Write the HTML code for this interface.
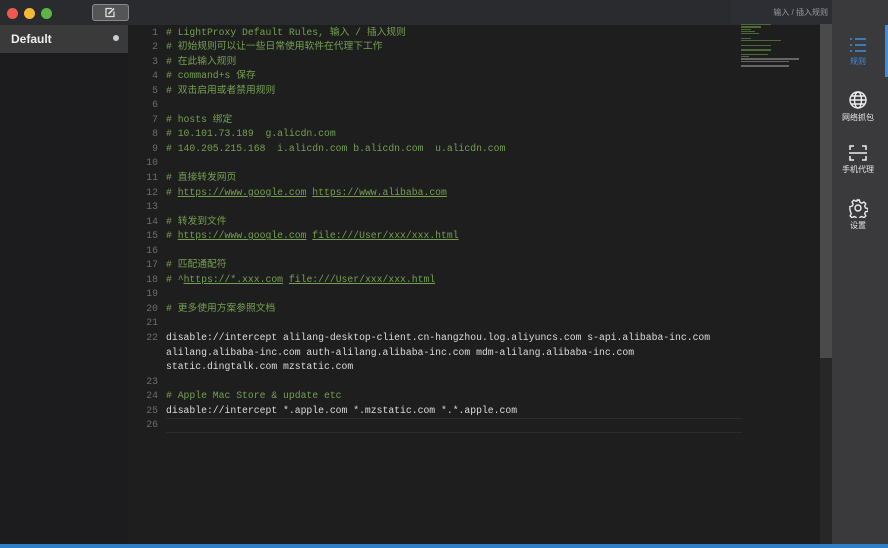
<!DOCTYPE html>
<html><head><meta charset="utf-8"><style>
*{margin:0;padding:0;box-sizing:border-box}
body{width:888px;height:548px;overflow:hidden;background:#1e1e1e;font-family:"Liberation Sans","Noto Sans CJK SC",sans-serif;position:relative}
.title{position:absolute;left:0;top:0;width:832px;height:25px;background:#2a2b2f}
.dot{position:absolute;top:8px;width:11px;height:11px;border-radius:50%}
.btn{position:absolute;left:92px;top:4px;width:37px;height:17px;border:1px solid #8a8a8a;border-radius:3px;background:#555}
.side{position:absolute;left:0;top:25px;width:128px;height:519px;background:#1c1c1e}
.sel{position:absolute;left:0;top:25px;width:128px;height:28px;background:#3a3a3a;color:#eee;font-size:12px;font-weight:bold;padding:7px 11px}
.sel i{position:absolute;right:9px;top:10px;width:6px;height:6px;border-radius:50%;background:#c8ccd6}
.ed{position:absolute;left:128px;top:25.5px;width:692px;height:518px;background:#1e1e1e;font-family:"Liberation Mono","Noto Sans CJK SC",monospace;font-size:9.75px}
.l{height:14.55px;line-height:14.55px;position:relative;white-space:pre;color:#dcdcdc;padding-left:38px}
.l b{position:absolute;left:0;width:30px;text-align:right;color:#6c6c6c;font-weight:normal}
.c{color:#73a050}
.c u{text-decoration:underline}
.cur{border-top:1px solid #2c2c2c;border-bottom:1px solid #2c2c2c;width:576px;margin-left:38px;padding-left:0}
.sb{position:absolute;left:820px;top:24px;width:12px;height:520px;background:#272727}
.th{position:absolute;left:820px;top:24px;width:12px;height:334px;background:#4a4a4a}
.right{position:absolute;left:832px;top:0;width:56px;height:544px;background:#3a3a3c}
.acc{position:absolute;left:885px;top:25px;width:3px;height:52px;background:#3c8ee0}
.it{position:absolute;left:832px;width:52px;text-align:center;font-size:8px;color:#e8e8e8}
.bc{position:absolute;left:730px;top:0;width:102px;height:24px;background:#2d2e33;color:#9a9a9a;font-size:8px;text-align:right;padding:7px 4px 0 0}
.bot{position:absolute;left:0;top:544px;width:888px;height:4px;background:#2f7fc8}
.mm{position:absolute;left:741px;top:24px;width:60px;height:48px}
.mm div{height:1.3px;margin-bottom:1px;background:#4d6a36}
</style></head><body>
<div class="title"></div>
<div class="dot" style="left:7px;background:#ee5a52"></div>
<div class="dot" style="left:24px;background:#f4b935"></div>
<div class="dot" style="left:41px;background:#5cb545"></div>
<div class="btn"><svg width="35" height="15" viewBox="0 0 35 15"><path d="M19 3.5h-6v8h8v-5" fill="none" stroke="#ddd" stroke-width="1.3"/><path d="M15.5 9l5.5-5.5" stroke="#ddd" stroke-width="1.6"/></svg></div>
<div class="side"></div>
<div class="sel">Default<i></i></div>
<div class="ed">
<div class="l c"><b>1</b># LightProxy Default Rules, 输入 / 插入规则</div>
<div class="l c"><b>2</b># 初始规则可以让一些日常使用软件在代理下工作</div>
<div class="l c"><b>3</b># 在此输入规则</div>
<div class="l c"><b>4</b># command+s 保存</div>
<div class="l c"><b>5</b># 双击启用或者禁用规则</div>
<div class="l"><b>6</b></div>
<div class="l c"><b>7</b># hosts 绑定</div>
<div class="l c"><b>8</b># 10.101.73.189  g.alicdn.com</div>
<div class="l c"><b>9</b># 140.205.215.168  i.alicdn.com b.alicdn.com  u.alicdn.com</div>
<div class="l"><b>10</b></div>
<div class="l c"><b>11</b># 直接转发网页</div>
<div class="l c"><b>12</b># <u>https://www.google.com</u> <u>https://www.alibaba.com</u></div>
<div class="l"><b>13</b></div>
<div class="l c"><b>14</b># 转发到文件</div>
<div class="l c"><b>15</b># <u>https://www.google.com</u> <u>file:///User/xxx/xxx.html</u></div>
<div class="l"><b>16</b></div>
<div class="l c"><b>17</b># 匹配通配符</div>
<div class="l c"><b>18</b># ^<u>https://*.xxx.com</u> <u>file:///User/xxx/xxx.html</u></div>
<div class="l"><b>19</b></div>
<div class="l c"><b>20</b># 更多使用方案参照文档</div>
<div class="l"><b>21</b></div>
<div class="l"><b>22</b>disable://intercept alilang-desktop-client.cn-hangzhou.log.aliyuncs.com s-api.alibaba-inc.com</div>
<div class="l">alilang.alibaba-inc.com auth-alilang.alibaba-inc.com mdm-alilang.alibaba-inc.com</div>
<div class="l">static.dingtalk.com mzstatic.com</div>
<div class="l"><b>23</b></div>
<div class="l c"><b>24</b># Apple Mac Store &amp; update etc</div>
<div class="l"><b>25</b>disable://intercept *.apple.com *.mzstatic.com *.*.apple.com</div>
<div class="l" style="padding-left:0"><b>26</b><div class="cur" style="height:14.55px"></div></div>
</div>
<div class="mm"><div style="width:30px"></div><div style="width:20px"></div><div style="width:10px"></div><div style="width:14px"></div><div style="width:18px"></div><div style="width:0"></div><div style="width:10px"></div><div style="width:40px"></div><div style="width:0"></div><div style="width:30px"></div><div style="width:0"></div><div style="width:30px"></div><div style="width:0"></div><div style="width:27px"></div><div style="width:8px"></div><div style="width:58px;background:#666"></div><div style="width:48px;background:#666"></div><div style="width:0"></div><div style="width:48px;background:#666"></div></div>
<div class="sb"></div><div class="th"></div>
<div class="bc">输入 / 插入规则</div>
<div class="right"></div>
<div class="acc"></div>
<div class="it" style="top:37px"><svg width="20" height="16" viewBox="0 0 20 16"><g stroke="#3c8ee0" stroke-width="1.6"><path d="M2 2h2M7 2h11M2 8h2M7 8h11M2 14h2M7 14h11"/></g></svg><div style="color:#3c8ee0;margin-top:1px">规则</div></div>
<div class="it" style="top:90px"><svg width="20" height="20" viewBox="0 0 20 20" fill="none" stroke="#eee" stroke-width="1.4"><circle cx="10" cy="10" r="8"/><ellipse cx="10" cy="10" rx="3.5" ry="8"/><path d="M2 10h16M3.5 6h13M3.5 14h13"/></svg><div>网络抓包</div></div>
<div class="it" style="top:144px"><svg width="20" height="18" viewBox="0 0 20 18" fill="none" stroke="#eee" stroke-width="1.5"><path d="M2 6V2h4M14 2h4v4M2 12v4h4M14 16h4v-4M1 9h18"/></svg><div>手机代理</div></div>
<div class="it" style="top:198px"><svg width="20" height="20" viewBox="0 0 20 20" fill="none" stroke="#eee" stroke-width="1.4"><path d="M8.5 1.5h3l.5 2.5 2 1 2.3-1.3 2 2-1.3 2.3.9 2 2.6.5v3l-2.6.5-.9 2 1.3 2.3-2 2-2.3-1.3-2 .9-.5 2.6h-3l-.5-2.6-2-.9-2.3 1.3-2-2 1.3-2.3-.9-2L1.5 11.5v-3l2.6-.5.9-2L3.7 3.7l2-2L8 3l2-.9z" transform="scale(.95) translate(.5 .5)"/><circle cx="10" cy="10" r="3"/></svg><div>设置</div></div>
<div class="bot"></div>
</body></html>
